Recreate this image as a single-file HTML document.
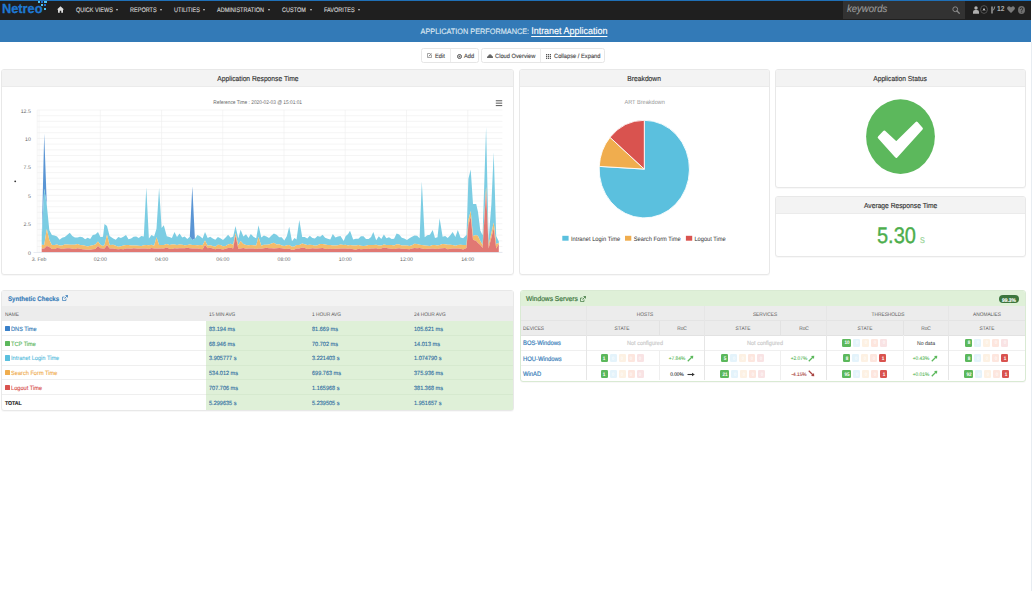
<!DOCTYPE html>
<html><head><meta charset="utf-8">
<style>
*{box-sizing:border-box;margin:0;padding:0}
html,body{width:1033px;height:591px;overflow:hidden;background:#fff;font-family:"Liberation Sans",sans-serif;color:#333;text-rendering:geometricPrecision}
body div{-webkit-text-stroke:.13px currentColor}
.a{position:absolute}
.s{display:inline-block;transform:scaleX(.925);transform-origin:0 50%;white-space:nowrap}
.sc{display:inline-block;transform:scaleX(.925);transform-origin:50% 50%;white-space:nowrap}
#topline{left:0;top:0;width:1031px;height:1px;background:#1f70b8}
#nav{left:0;top:1px;width:1031px;height:19px;background:#1f1f1f}
#band{left:0;top:20px;width:1031px;height:21.5px;background:#337ab7}
#sb{left:1031px;top:42px;width:1.3px;height:549px;background:#e8edf2}
.panel{position:absolute;border:1px solid #e8e8e8;border-radius:3px;background:#fff;box-shadow:0 1px 1px rgba(0,0,0,.03)}
.ph{position:absolute;left:0;top:0;right:0;height:17px;background:#f3f3f3;border-bottom:1px solid #ebebeb;border-radius:2px 2px 0 0;text-align:center}
.navt{top:4.5px;font:6.6px/12px 'Liberation Sans',sans-serif;color:#d5d5d5;transform:scaleX(.84);transform-origin:0 50%;white-space:nowrap}
.caret{top:8.5px;width:0;height:0;border-left:1.8px solid transparent;border-right:1.8px solid transparent;border-top:2px solid #ccc}
.bg{border:1px solid #e6e6e6;border-radius:2.5px;background:#fff}
.bt{top:51.6px;font:6.2px/10px 'Liberation Sans',sans-serif;color:#4a4a4a;transform:scaleX(.925);transform-origin:0 50%;white-space:nowrap}
.pt{display:inline-block;position:relative;top:-2.4px;font:7.25px/17px 'Liberation Sans',sans-serif;color:#333;transform:scaleX(.925);white-space:nowrap;-webkit-text-stroke:.15px #333}
</style></head><body>
<div class="a" id="topline"></div>
<div class="a" id="nav"></div>
<div class="a" id="band"></div>
<div class="a" id="sb"></div>
<div class="a" id="logo" style="left:2px;top:1.5px;font:bold 13.2px/14px 'Liberation Sans',sans-serif;color:#1e78d2;transform:scaleX(.97);transform-origin:0 50%;-webkit-text-stroke:.3px #1e78d2">Netreo</div>
<div class="a" style="left:38px;top:1px;width:2px;height:2px;background:#4fc3f0"></div>
<div class="a" style="left:41px;top:1px;width:2px;height:2px;background:#1f6fd0"></div>
<div class="a" style="left:44px;top:1px;width:3px;height:2px;background:#4fc3f0"></div>
<div class="a" style="left:41px;top:4px;width:2px;height:2px;background:#4fc3f0"></div>
<div class="a" style="left:44px;top:4px;width:2px;height:2px;background:#1f6fd0"></div>
<div class="a" style="left:44px;top:8px;width:2px;height:2px;background:#4fc3f0"></div>
<svg class="a" style="left:57px;top:6px" width="7" height="7" viewBox="0 0 14 13"><path d="M7 0 L14 6.5 L12 6.5 L12 13 L8.5 13 L8.5 9 L5.5 9 L5.5 13 L2 13 L2 6.5 L0 6.5 Z" fill="#ddd"/></svg>
<div class="a navt" style="left:75.5px">QUICK VIEWS</div><div class="a caret" style="left:115.8px"></div>
<div class="a navt" style="left:129.8px">REPORTS</div><div class="a caret" style="left:160.3px"></div>
<div class="a navt" style="left:173.9px">UTILITIES</div><div class="a caret" style="left:202.8px"></div>
<div class="a navt" style="left:217.3px">ADMINISTRATION</div><div class="a caret" style="left:267.8px"></div>
<div class="a navt" style="left:282px">CUSTOM</div><div class="a caret" style="left:309.8px"></div>
<div class="a navt" style="left:323.8px">FAVORITES</div><div class="a caret" style="left:357.8px"></div>
<div class="a" style="left:843px;top:1px;width:122px;height:18px;background:#323232"></div>
<div class="a s" style="left:846.5px;top:3px;font:italic 10.3px/14px 'Liberation Sans',sans-serif;color:#9a9a9a">keywords</div>
<svg class="a" style="left:952px;top:6px" width="8" height="8" viewBox="0 0 16 16"><circle cx="6.5" cy="6.5" r="4.8" fill="none" stroke="#8a8a8a" stroke-width="2"/><path d="M10 10 L14.5 14.5" stroke="#8a8a8a" stroke-width="2.6" stroke-linecap="round"/></svg>
<svg class="a" style="left:973px;top:5.5px" width="6" height="8" viewBox="0 0 12 16"><circle cx="6" cy="4" r="3.4" fill="#b0b0b0"/><path d="M0 15.5 L0 12 Q0 8 4 8 L8 8 Q12 8 12 12 L12 15.5 Z" fill="#b0b0b0"/></svg>
<svg class="a" style="left:980px;top:5px" width="8" height="9" viewBox="0 0 16 18"><ellipse cx="8" cy="9" rx="6.8" ry="7.8" fill="#1a1a1a" stroke="#5a5a5a" stroke-width="1.8"/><path d="M5 12 L8 5.5 L11 12 L8 10 Z" fill="#ddd"/></svg>
<svg class="a" style="left:991px;top:6px" width="5" height="8" viewBox="0 0 10 16"><path d="M2 1 L2 15" stroke="#8a8a8a" stroke-width="3.4"/><path d="M3 9 Q7 7 7.5 1" fill="none" stroke="#8a8a8a" stroke-width="2.4"/></svg>
<div class="a s" style="left:997.3px;top:5.4px;font:bold 7.2px/8px 'Liberation Sans',sans-serif;color:#aaa;-webkit-text-stroke:0">12</div>
<svg class="a" style="left:1007px;top:6px" width="8" height="7" viewBox="0 0 16 14"><path d="M8 14 L1.5 7.5 Q-1 4.5 1.2 1.8 Q4.2 -1 8 3 Q11.8 -1 14.8 1.8 Q17 4.5 14.5 7.5 Z" fill="#7a7a7a"/></svg>
<svg class="a" style="left:1018px;top:5.5px" width="7" height="8" viewBox="0 0 14 16"><ellipse cx="7" cy="8" rx="7" ry="8" fill="#6f6f6f"/><path d="M4.6 6 Q4.6 3.5 7 3.5 Q9.4 3.5 9.4 5.8 Q9.4 7.3 7.6 8.2 L7.3 10" fill="none" stroke="#222" stroke-width="1.6"/><circle cx="7.2" cy="12.2" r="1" fill="#222"/></svg>
<div class="a" id="title" style="left:0;top:20.6px;width:1031px;height:21.5px;text-align:center;font:7.9px/21.5px 'Liberation Sans',sans-serif;color:#dfe9f3"><span class="sc" style="position:relative;left:-1.6px"><span>APPLICATION PERFORMANCE:</span> <span style="color:#fff;font-size:9.7px;text-decoration:underline;text-underline-offset:1.6px;text-decoration-thickness:.7px">Intranet Application</span></span></div>


<div class="a bg" style="left:421px;top:48.4px;width:58px;height:14.4px"></div>
<div class="a" style="left:450px;top:48.9px;width:1px;height:13.2px;background:#ececec"></div>
<div class="a bg" style="left:481px;top:48.4px;width:124.2px;height:14.4px"></div>
<div class="a" style="left:540px;top:48.9px;width:1px;height:13.2px;background:#ececec"></div>
<svg class="a" style="left:427px;top:53.3px" width="5" height="5" viewBox="0 0 10 10"><path d="M7 1 L1 1 L1 9 L9 9 L9 4" fill="none" stroke="#777" stroke-width="1.3"/><path d="M4 6.5 L9.5 1" stroke="#555" stroke-width="1.8"/></svg>
<div class="a bt" style="left:434.8px">Edit</div>
<svg class="a" style="left:456.5px;top:53.6px" width="5" height="5" viewBox="0 0 10 10"><circle cx="5" cy="5" r="4" fill="none" stroke="#555" stroke-width="2"/><path d="M5 3 L5 7 M3 5 L7 5" stroke="#555" stroke-width="1.4"/></svg>
<div class="a bt" style="left:463.9px">Add</div>
<svg class="a" style="left:486.5px;top:53.6px" width="6" height="4.5" viewBox="0 0 12 9"><path d="M2.5 9 Q0 9 0 6.5 Q0 4.3 2.3 4 Q2.8 0.5 6.3 0.5 Q9.2 0.5 9.8 3.5 Q12 3.8 12 6.3 Q12 9 9.5 9 Z" fill="#666"/></svg>
<div class="a bt" style="left:494.9px">Cloud Overview</div>
<svg class="a" style="left:545.8px;top:53.5px" width="5.5" height="5" viewBox="0 0 11 10"><g fill="#555"><rect x="0" y="0" width="2.5" height="2.5"/><rect x="4" y="0" width="2.5" height="2.5"/><rect x="8" y="0" width="2.5" height="2.5"/><rect x="0" y="3.7" width="2.5" height="2.5"/><rect x="4" y="3.7" width="2.5" height="2.5"/><rect x="8" y="3.7" width="2.5" height="2.5"/><rect x="0" y="7.4" width="2.5" height="2.5"/><rect x="4" y="7.4" width="2.5" height="2.5"/><rect x="8" y="7.4" width="2.5" height="2.5"/></g></svg>
<div class="a bt" style="left:554px">Collapse / Expand</div>

<div class="panel" style="left:1px;top:69px;width:513px;height:206.3px"><div class="ph"><span class="pt">Application Response Time</span></div></div>
<div class="panel" style="left:519px;top:69px;width:251px;height:206.3px"><div class="ph"><span class="pt">Breakdown</span></div></div>
<div class="panel" style="left:775px;top:69px;width:251px;height:119px"><div class="ph"><span class="pt">Application Status</span></div></div>
<div class="panel" style="left:775px;top:196px;width:251px;height:61px"><div class="ph"><span class="pt">Average Response Time</span></div></div>
<!--CHART-->
<svg class="a" style="left:0;top:87px" width="514" height="188" viewBox="0 87 514 188">
<g stroke="#efefef" stroke-width="0.6"><line x1="37.2" y1="110.00" x2="502.4" y2="110.00"/><line x1="37.2" y1="115.69" x2="502.4" y2="115.69"/><line x1="37.2" y1="121.38" x2="502.4" y2="121.38"/><line x1="37.2" y1="127.06" x2="502.4" y2="127.06"/><line x1="37.2" y1="132.75" x2="502.4" y2="132.75"/><line x1="37.2" y1="138.44" x2="502.4" y2="138.44"/><line x1="37.2" y1="144.13" x2="502.4" y2="144.13"/><line x1="37.2" y1="149.82" x2="502.4" y2="149.82"/><line x1="37.2" y1="155.50" x2="502.4" y2="155.50"/><line x1="37.2" y1="161.19" x2="502.4" y2="161.19"/><line x1="37.2" y1="166.88" x2="502.4" y2="166.88"/><line x1="37.2" y1="172.57" x2="502.4" y2="172.57"/><line x1="37.2" y1="178.26" x2="502.4" y2="178.26"/><line x1="37.2" y1="183.94" x2="502.4" y2="183.94"/><line x1="37.2" y1="189.63" x2="502.4" y2="189.63"/><line x1="37.2" y1="195.32" x2="502.4" y2="195.32"/><line x1="37.2" y1="201.01" x2="502.4" y2="201.01"/><line x1="37.2" y1="206.70" x2="502.4" y2="206.70"/><line x1="37.2" y1="212.38" x2="502.4" y2="212.38"/><line x1="37.2" y1="218.07" x2="502.4" y2="218.07"/><line x1="37.2" y1="223.76" x2="502.4" y2="223.76"/><line x1="37.2" y1="229.45" x2="502.4" y2="229.45"/><line x1="37.2" y1="235.14" x2="502.4" y2="235.14"/><line x1="37.2" y1="240.82" x2="502.4" y2="240.82"/><line x1="37.2" y1="246.51" x2="502.4" y2="246.51"/><line x1="37.2" y1="252.20" x2="502.4" y2="252.20"/><line x1="39.06" y1="110.0" x2="39.06" y2="252.2"/><line x1="100.30" y1="110.0" x2="100.30" y2="252.2"/><line x1="161.54" y1="110.0" x2="161.54" y2="252.2"/><line x1="222.78" y1="110.0" x2="222.78" y2="252.2"/><line x1="284.02" y1="110.0" x2="284.02" y2="252.2"/><line x1="345.26" y1="110.0" x2="345.26" y2="252.2"/><line x1="406.50" y1="110.0" x2="406.50" y2="252.2"/><line x1="467.74" y1="110.0" x2="467.74" y2="252.2"/><line x1="37.2" y1="110.0" x2="37.2" y2="252.2"/></g>
<polygon points="41.7,239.1 44.2,133.6 46.8,205.0 49.3,230.0 51.9,235.1 54.5,235.5 57.0,236.4 59.6,239.7 62.1,237.8 64.7,237.1 67.2,235.0 69.8,232.7 72.3,236.1 74.9,237.6 77.5,237.6 80.0,236.8 82.6,237.2 85.1,239.2 87.7,237.8 90.2,239.1 92.8,235.1 95.3,234.5 98.0,232.0 100.4,237.1 103.0,236.8 104.5,224.0 107.0,226.0 109.6,236.0 113.2,238.4 115.8,239.7 118.3,237.1 120.9,238.1 123.4,236.8 126.0,235.0 128.5,239.3 131.1,238.5 133.6,236.8 136.2,236.5 138.7,237.9 141.3,235.9 143.8,236.6 146.3,187.2 148.9,238.4 151.5,235.0 154.1,236.5 156.5,228.7 159.1,187.8 161.6,228.0 163.8,225.3 166.8,236.3 169.4,237.0 171.9,238.0 174.5,232.1 177.0,236.9 179.6,233.6 182.2,237.4 184.7,236.6 187.3,239.1 189.8,236.8 192.3,186.3 194.9,238.7 197.5,235.1 200.0,236.2 202.6,238.5 205.0,232.0 207.7,238.1 210.2,236.8 212.8,238.5 215.3,239.7 217.9,236.9 220.4,238.3 223.0,240.0 225.6,237.6 228.1,234.7 230.7,237.8 233.2,236.4 235.5,226.0 238.3,238.4 240.6,229.7 243.4,236.5 246.0,234.2 248.5,238.1 250.8,234.0 253.7,237.1 256.2,238.2 258.5,225.2 261.3,237.5 263.9,235.4 266.4,236.5 269.0,238.0 271.5,235.4 273.9,233.4 276.6,234.7 279.2,237.2 281.7,237.2 284.3,240.5 286.9,235.9 289.2,226.7 292.0,241.3 294.5,238.1 296.5,239.6 299.3,220.1 302.2,236.9 304.7,237.1 307.3,238.4 309.8,235.8 312.4,238.0 314.9,238.4 317.5,235.9 320.1,236.7 322.6,234.8 325.1,237.8 327.7,238.7 330.3,239.4 332.8,234.0 335.4,237.6 337.9,236.5 340.5,236.1 343.7,240.9 345.6,236.2 348.1,234.0 350.0,230.8 353.2,239.5 355.8,238.7 358.4,238.8 360.9,236.2 363.5,236.3 366.0,238.9 368.6,238.9 371.1,237.0 373.3,232.0 376.2,240.3 378.8,236.3 381.3,239.0 383.9,234.6 386.4,238.2 389.0,237.2 391.6,239.1 394.1,238.7 396.6,233.6 399.2,234.6 401.8,237.8 404.3,238.5 406.9,240.1 409.4,238.3 412.0,236.8 414.5,235.4 417.1,235.8 419.6,238.2 421.8,181.6 424.7,237.3 427.3,235.2 429.9,234.7 432.7,230.0 435.0,237.9 437.5,237.3 439.6,218.3 442.6,236.8 445.2,236.0 447.7,238.0 450.3,235.3 452.7,232.0 455.4,236.9 457.8,230.0 460.5,237.5 463.1,238.2 466.5,235.0 468.4,178.8 470.7,169.5 473.0,204.0 476.2,204.0 478.0,212.0 480.3,230.6 482.6,235.2 486.1,126.9 488.6,239.8 491.4,204.0 493.7,152.3 496.2,235.9 498.8,241.5 498.8,241.5 496.2,235.9 493.7,152.3 491.4,204.0 488.6,239.8 486.1,126.9 482.6,235.2 480.3,230.6 478.0,212.0 476.2,204.0 473.0,204.0 470.7,169.5 468.4,178.8 466.5,235.0 463.1,238.2 460.5,237.5 457.8,230.0 455.4,236.9 452.7,232.0 450.3,235.3 447.7,238.0 445.2,236.0 442.6,236.8 439.6,218.3 437.5,237.3 435.0,237.9 432.7,230.0 429.9,234.7 427.3,235.2 424.7,237.3 421.8,181.6 419.6,238.2 417.1,235.8 414.5,235.4 412.0,236.8 409.4,238.3 406.9,240.1 404.3,238.5 401.8,237.8 399.2,234.6 396.6,233.6 394.1,238.7 391.6,239.1 389.0,237.2 386.4,238.2 383.9,234.6 381.3,239.0 378.8,236.3 376.2,240.3 373.3,232.0 371.1,237.0 368.6,238.9 366.0,238.9 363.5,236.3 360.9,236.2 358.4,238.8 355.8,238.7 353.2,239.5 350.0,230.8 348.1,234.0 345.6,236.2 343.7,240.9 340.5,236.1 337.9,236.5 335.4,237.6 332.8,234.0 330.3,239.4 327.7,238.7 325.1,237.8 322.6,234.8 320.1,236.7 317.5,235.9 314.9,238.4 312.4,238.0 309.8,235.8 307.3,238.4 304.7,237.1 302.2,236.9 299.3,220.1 296.5,239.6 294.5,238.1 292.0,241.3 289.2,226.7 286.9,235.9 284.3,240.5 281.7,237.2 279.2,237.2 276.6,234.7 273.9,233.4 271.5,235.4 269.0,238.0 266.4,236.5 263.9,235.4 261.3,237.5 258.5,225.2 256.2,238.2 253.7,237.1 250.8,234.0 248.5,238.1 246.0,234.2 243.4,236.5 240.6,229.7 238.3,238.4 235.5,226.0 233.2,236.4 230.7,237.8 228.1,234.7 225.6,237.6 223.0,240.0 220.4,238.3 217.9,236.9 215.3,239.7 212.8,238.5 210.2,236.8 207.7,238.1 205.0,232.0 202.6,238.5 200.0,236.2 197.5,235.1 194.9,238.7 192.3,240.0 189.8,236.8 187.3,239.1 184.7,236.6 182.2,237.4 179.6,233.6 177.0,236.9 174.5,232.1 171.9,238.0 169.4,237.0 166.8,236.3 163.8,225.3 161.6,228.0 159.1,187.8 156.5,228.7 154.1,236.5 151.5,235.0 148.9,238.4 146.3,187.2 143.8,236.6 141.3,235.9 138.7,237.9 136.2,236.5 133.6,236.8 131.1,238.5 128.5,239.3 126.0,235.0 123.4,236.8 120.9,238.1 118.3,237.1 115.8,239.7 113.2,238.4 109.6,236.0 107.0,226.0 104.5,224.0 103.0,236.8 100.4,237.1 98.0,232.0 95.3,234.5 92.8,235.1 90.2,239.1 87.7,237.8 85.1,239.2 82.6,237.2 80.0,236.8 77.5,237.6 74.9,237.6 72.3,236.1 69.8,232.7 67.2,235.0 64.7,237.1 62.1,237.8 59.6,239.7 57.0,236.4 54.5,235.5 51.9,235.1 49.3,230.0 46.8,205.0 44.2,188.7 41.7,239.1" fill="#5a95d4"/>
<polygon points="41.7,239.1 44.2,188.7 46.8,205.0 49.3,230.0 51.9,235.1 54.5,235.5 57.0,236.4 59.6,239.7 62.1,237.8 64.7,237.1 67.2,235.0 69.8,232.7 72.3,236.1 74.9,237.6 77.5,237.6 80.0,236.8 82.6,237.2 85.1,239.2 87.7,237.8 90.2,239.1 92.8,235.1 95.3,234.5 98.0,232.0 100.4,237.1 103.0,236.8 104.5,224.0 107.0,226.0 109.6,236.0 113.2,238.4 115.8,239.7 118.3,237.1 120.9,238.1 123.4,236.8 126.0,235.0 128.5,239.3 131.1,238.5 133.6,236.8 136.2,236.5 138.7,237.9 141.3,235.9 143.8,236.6 146.3,187.2 148.9,238.4 151.5,235.0 154.1,236.5 156.5,228.7 159.1,187.8 161.6,228.0 163.8,225.3 166.8,236.3 169.4,237.0 171.9,238.0 174.5,232.1 177.0,236.9 179.6,233.6 182.2,237.4 184.7,236.6 187.3,239.1 189.8,236.8 192.3,240.0 194.9,238.7 197.5,235.1 200.0,236.2 202.6,238.5 205.0,232.0 207.7,238.1 210.2,236.8 212.8,238.5 215.3,239.7 217.9,236.9 220.4,238.3 223.0,240.0 225.6,237.6 228.1,234.7 230.7,237.8 233.2,236.4 235.5,226.0 238.3,238.4 240.6,229.7 243.4,236.5 246.0,234.2 248.5,238.1 250.8,234.0 253.7,237.1 256.2,238.2 258.5,225.2 261.3,237.5 263.9,235.4 266.4,236.5 269.0,238.0 271.5,235.4 273.9,233.4 276.6,234.7 279.2,237.2 281.7,237.2 284.3,240.5 286.9,235.9 289.2,226.7 292.0,241.3 294.5,238.1 296.5,239.6 299.3,220.1 302.2,236.9 304.7,237.1 307.3,238.4 309.8,235.8 312.4,238.0 314.9,238.4 317.5,235.9 320.1,236.7 322.6,234.8 325.1,237.8 327.7,238.7 330.3,239.4 332.8,234.0 335.4,237.6 337.9,236.5 340.5,236.1 343.7,240.9 345.6,236.2 348.1,234.0 350.0,230.8 353.2,239.5 355.8,238.7 358.4,238.8 360.9,236.2 363.5,236.3 366.0,238.9 368.6,238.9 371.1,237.0 373.3,232.0 376.2,240.3 378.8,236.3 381.3,239.0 383.9,234.6 386.4,238.2 389.0,237.2 391.6,239.1 394.1,238.7 396.6,233.6 399.2,234.6 401.8,237.8 404.3,238.5 406.9,240.1 409.4,238.3 412.0,236.8 414.5,235.4 417.1,235.8 419.6,238.2 421.8,181.6 424.7,237.3 427.3,235.2 429.9,234.7 432.7,230.0 435.0,237.9 437.5,237.3 439.6,218.3 442.6,236.8 445.2,236.0 447.7,238.0 450.3,235.3 452.7,232.0 455.4,236.9 457.8,230.0 460.5,237.5 463.1,238.2 466.5,235.0 468.4,178.8 470.7,169.5 473.0,204.0 476.2,204.0 478.0,212.0 480.3,230.6 482.6,235.2 486.1,126.9 488.6,239.8 491.4,204.0 493.7,152.3 496.2,235.9 498.8,241.5 498.8,243.0 496.2,244.1 493.7,222.5 491.4,233.0 488.6,244.9 486.1,186.8 482.6,245.0 480.3,241.0 478.0,236.0 476.2,235.0 473.0,236.0 470.7,211.0 468.4,220.0 466.5,245.0 463.1,245.0 460.5,244.8 457.8,245.0 455.4,245.7 452.7,245.0 450.3,244.7 447.7,244.8 445.2,244.3 442.6,244.0 439.6,245.0 437.5,245.6 435.0,245.1 432.7,245.0 429.9,246.0 427.3,245.7 424.7,245.6 421.8,245.0 419.6,244.8 417.1,244.1 414.5,243.7 412.0,245.2 409.4,246.1 406.9,245.5 404.3,245.5 401.8,245.6 399.2,244.4 396.6,244.2 394.1,245.5 391.6,245.1 389.0,245.1 386.4,244.9 383.9,244.6 381.3,245.6 378.8,245.6 376.2,244.8 373.3,245.0 371.1,244.9 368.6,245.1 366.0,245.8 363.5,246.0 360.9,245.8 358.4,245.1 355.8,245.4 353.2,245.5 350.0,245.0 348.1,245.4 345.6,244.7 343.7,245.0 340.5,244.4 337.9,245.3 335.4,245.5 332.8,245.4 330.3,244.9 327.7,245.1 325.1,244.6 322.6,243.9 320.1,243.9 317.5,245.2 314.9,245.7 312.4,245.1 309.8,244.8 307.3,245.0 304.7,244.3 302.2,243.5 299.3,245.0 296.5,245.0 294.5,246.4 292.0,246.8 289.2,245.0 286.9,245.3 284.3,246.1 281.7,245.6 279.2,244.2 276.6,244.6 273.9,242.8 271.5,243.6 269.0,244.6 266.4,244.8 263.9,244.8 261.3,245.7 258.5,237.1 256.2,245.4 253.7,245.2 250.8,245.0 248.5,245.3 246.0,245.0 243.4,244.1 240.6,241.0 238.3,245.2 235.5,233.0 233.2,244.8 230.7,243.8 228.1,244.5 225.6,246.0 223.0,246.3 220.4,245.0 217.9,244.8 215.3,246.8 212.8,246.1 210.2,245.2 207.7,245.7 205.0,240.6 202.6,245.3 200.0,245.1 197.5,245.2 194.9,245.1 192.3,245.0 189.8,244.6 187.3,244.9 184.7,245.3 182.2,244.8 179.6,244.5 177.0,245.0 174.5,244.5 171.9,244.6 169.4,244.9 166.8,244.1 163.8,245.0 161.6,245.0 159.1,245.0 156.5,237.3 154.1,245.7 151.5,244.7 148.9,245.3 146.3,245.0 143.8,245.3 141.3,245.9 138.7,245.7 136.2,245.5 133.6,245.5 131.1,245.6 128.5,245.0 126.0,245.0 123.4,245.6 120.9,246.2 118.3,246.8 115.8,245.8 113.2,244.7 109.6,245.0 107.0,234.7 104.5,245.0 103.0,246.0 100.4,244.7 98.0,241.6 95.3,244.6 92.8,245.3 90.2,245.7 87.7,246.4 85.1,245.8 82.6,245.3 80.0,245.1 77.5,244.1 74.9,244.8 72.3,244.8 69.8,244.7 67.2,244.4 64.7,244.4 62.1,245.6 59.6,245.4 57.0,244.5 54.5,245.0 51.9,244.9 49.3,240.0 46.8,229.0 44.2,245.0 41.7,244.8" fill="#7ccde3"/>
<polygon points="41.7,244.8 44.2,245.0 46.8,229.0 49.3,240.0 51.9,244.9 54.5,245.0 57.0,244.5 59.6,245.4 62.1,245.6 64.7,244.4 67.2,244.4 69.8,244.7 72.3,244.8 74.9,244.8 77.5,244.1 80.0,245.1 82.6,245.3 85.1,245.8 87.7,246.4 90.2,245.7 92.8,245.3 95.3,244.6 98.0,241.6 100.4,244.7 103.0,246.0 104.5,245.0 107.0,234.7 109.6,245.0 113.2,244.7 115.8,245.8 118.3,246.8 120.9,246.2 123.4,245.6 126.0,245.0 128.5,245.0 131.1,245.6 133.6,245.5 136.2,245.5 138.7,245.7 141.3,245.9 143.8,245.3 146.3,245.0 148.9,245.3 151.5,244.7 154.1,245.7 156.5,237.3 159.1,245.0 161.6,245.0 163.8,245.0 166.8,244.1 169.4,244.9 171.9,244.6 174.5,244.5 177.0,245.0 179.6,244.5 182.2,244.8 184.7,245.3 187.3,244.9 189.8,244.6 192.3,245.0 194.9,245.1 197.5,245.2 200.0,245.1 202.6,245.3 205.0,240.6 207.7,245.7 210.2,245.2 212.8,246.1 215.3,246.8 217.9,244.8 220.4,245.0 223.0,246.3 225.6,246.0 228.1,244.5 230.7,243.8 233.2,244.8 235.5,233.0 238.3,245.2 240.6,241.0 243.4,244.1 246.0,245.0 248.5,245.3 250.8,245.0 253.7,245.2 256.2,245.4 258.5,237.1 261.3,245.7 263.9,244.8 266.4,244.8 269.0,244.6 271.5,243.6 273.9,242.8 276.6,244.6 279.2,244.2 281.7,245.6 284.3,246.1 286.9,245.3 289.2,245.0 292.0,246.8 294.5,246.4 296.5,245.0 299.3,245.0 302.2,243.5 304.7,244.3 307.3,245.0 309.8,244.8 312.4,245.1 314.9,245.7 317.5,245.2 320.1,243.9 322.6,243.9 325.1,244.6 327.7,245.1 330.3,244.9 332.8,245.4 335.4,245.5 337.9,245.3 340.5,244.4 343.7,245.0 345.6,244.7 348.1,245.4 350.0,245.0 353.2,245.5 355.8,245.4 358.4,245.1 360.9,245.8 363.5,246.0 366.0,245.8 368.6,245.1 371.1,244.9 373.3,245.0 376.2,244.8 378.8,245.6 381.3,245.6 383.9,244.6 386.4,244.9 389.0,245.1 391.6,245.1 394.1,245.5 396.6,244.2 399.2,244.4 401.8,245.6 404.3,245.5 406.9,245.5 409.4,246.1 412.0,245.2 414.5,243.7 417.1,244.1 419.6,244.8 421.8,245.0 424.7,245.6 427.3,245.7 429.9,246.0 432.7,245.0 435.0,245.1 437.5,245.6 439.6,245.0 442.6,244.0 445.2,244.3 447.7,244.8 450.3,244.7 452.7,245.0 455.4,245.7 457.8,245.0 460.5,244.8 463.1,245.0 466.5,245.0 468.4,220.0 470.7,211.0 473.0,236.0 476.2,235.0 478.0,236.0 480.3,241.0 482.6,245.0 486.1,186.8 488.6,244.9 491.4,233.0 493.7,222.5 496.2,244.1 498.8,243.0 498.8,244.0 496.2,248.4 493.7,228.3 491.4,237.5 488.6,248.5 486.1,191.4 482.6,248.0 480.3,245.0 478.0,243.0 476.2,241.0 473.0,239.8 470.7,216.8 468.4,225.0 466.5,248.0 463.1,249.4 460.5,248.8 457.8,248.5 455.4,248.5 452.7,248.5 450.3,248.8 447.7,249.2 445.2,248.1 442.6,248.2 439.6,248.5 437.5,249.1 435.0,248.8 432.7,248.5 429.9,248.7 427.3,248.8 424.7,248.9 421.8,248.5 419.6,248.1 417.1,248.2 414.5,248.1 412.0,248.5 409.4,249.2 406.9,249.0 404.3,248.8 401.8,248.7 399.2,248.3 396.6,248.5 394.1,248.9 391.6,248.7 389.0,248.6 386.4,248.0 383.9,247.5 381.3,248.6 378.8,249.0 376.2,248.2 373.3,248.5 371.1,248.5 368.6,248.9 366.0,248.8 363.5,249.0 360.9,249.2 358.4,248.8 355.8,249.7 353.2,249.3 350.0,248.5 348.1,248.7 345.6,248.4 343.7,248.5 340.5,248.5 337.9,248.7 335.4,248.8 332.8,248.9 330.3,248.5 327.7,248.9 325.1,248.7 322.6,248.0 320.1,248.3 317.5,248.6 314.9,248.4 312.4,248.2 309.8,248.7 307.3,249.1 304.7,248.0 302.2,247.6 299.3,248.5 296.5,248.5 294.5,249.4 292.0,249.9 289.2,248.5 286.9,248.9 284.3,248.8 281.7,248.3 279.2,248.1 276.6,248.2 273.9,248.5 271.5,248.3 269.0,248.3 266.4,247.8 263.9,248.2 261.3,248.7 258.5,248.5 256.2,249.0 253.7,248.6 250.8,248.5 248.5,248.5 246.0,248.8 243.4,248.1 240.6,248.5 238.3,248.7 235.5,235.5 233.2,248.4 230.7,247.8 228.1,248.1 225.6,248.7 223.0,249.4 220.4,249.0 217.9,248.6 215.3,249.3 212.8,248.6 210.2,247.7 207.7,248.2 205.0,245.0 202.6,249.2 200.0,248.9 197.5,248.6 194.9,248.6 192.3,248.5 189.8,248.2 187.3,247.7 184.7,248.3 182.2,248.3 179.6,248.3 177.0,248.4 174.5,248.3 171.9,248.9 169.4,248.7 166.8,247.4 163.8,248.5 161.6,248.5 159.1,248.5 156.5,248.5 154.1,248.6 151.5,248.0 148.9,248.9 146.3,248.5 143.8,248.4 141.3,248.5 138.7,248.8 136.2,248.4 133.6,248.2 131.1,248.8 128.5,248.4 126.0,248.4 123.4,249.2 120.9,249.1 118.3,249.3 115.8,249.0 113.2,248.5 109.6,248.5 107.0,245.0 104.5,248.5 103.0,248.5 100.4,248.3 98.0,245.9 95.3,249.1 92.8,249.3 90.2,249.7 87.7,249.7 85.1,249.4 82.6,249.2 80.0,248.7 77.5,248.2 74.9,248.9 72.3,248.8 69.8,248.3 67.2,248.2 64.7,248.5 62.1,248.9 59.6,248.2 57.0,248.0 54.5,248.9 51.9,249.1 49.3,247.0 46.8,245.9 44.2,248.5 41.7,248.4" fill="#f2bb6b"/>
<polygon points="41.7,248.4 44.2,248.5 46.8,245.9 49.3,247.0 51.9,249.1 54.5,248.9 57.0,248.0 59.6,248.2 62.1,248.9 64.7,248.5 67.2,248.2 69.8,248.3 72.3,248.8 74.9,248.9 77.5,248.2 80.0,248.7 82.6,249.2 85.1,249.4 87.7,249.7 90.2,249.7 92.8,249.3 95.3,249.1 98.0,245.9 100.4,248.3 103.0,248.5 104.5,248.5 107.0,245.0 109.6,248.5 113.2,248.5 115.8,249.0 118.3,249.3 120.9,249.1 123.4,249.2 126.0,248.4 128.5,248.4 131.1,248.8 133.6,248.2 136.2,248.4 138.7,248.8 141.3,248.5 143.8,248.4 146.3,248.5 148.9,248.9 151.5,248.0 154.1,248.6 156.5,248.5 159.1,248.5 161.6,248.5 163.8,248.5 166.8,247.4 169.4,248.7 171.9,248.9 174.5,248.3 177.0,248.4 179.6,248.3 182.2,248.3 184.7,248.3 187.3,247.7 189.8,248.2 192.3,248.5 194.9,248.6 197.5,248.6 200.0,248.9 202.6,249.2 205.0,245.0 207.7,248.2 210.2,247.7 212.8,248.6 215.3,249.3 217.9,248.6 220.4,249.0 223.0,249.4 225.6,248.7 228.1,248.1 230.7,247.8 233.2,248.4 235.5,235.5 238.3,248.7 240.6,248.5 243.4,248.1 246.0,248.8 248.5,248.5 250.8,248.5 253.7,248.6 256.2,249.0 258.5,248.5 261.3,248.7 263.9,248.2 266.4,247.8 269.0,248.3 271.5,248.3 273.9,248.5 276.6,248.2 279.2,248.1 281.7,248.3 284.3,248.8 286.9,248.9 289.2,248.5 292.0,249.9 294.5,249.4 296.5,248.5 299.3,248.5 302.2,247.6 304.7,248.0 307.3,249.1 309.8,248.7 312.4,248.2 314.9,248.4 317.5,248.6 320.1,248.3 322.6,248.0 325.1,248.7 327.7,248.9 330.3,248.5 332.8,248.9 335.4,248.8 337.9,248.7 340.5,248.5 343.7,248.5 345.6,248.4 348.1,248.7 350.0,248.5 353.2,249.3 355.8,249.7 358.4,248.8 360.9,249.2 363.5,249.0 366.0,248.8 368.6,248.9 371.1,248.5 373.3,248.5 376.2,248.2 378.8,249.0 381.3,248.6 383.9,247.5 386.4,248.0 389.0,248.6 391.6,248.7 394.1,248.9 396.6,248.5 399.2,248.3 401.8,248.7 404.3,248.8 406.9,249.0 409.4,249.2 412.0,248.5 414.5,248.1 417.1,248.2 419.6,248.1 421.8,248.5 424.7,248.9 427.3,248.8 429.9,248.7 432.7,248.5 435.0,248.8 437.5,249.1 439.6,248.5 442.6,248.2 445.2,248.1 447.7,249.2 450.3,248.8 452.7,248.5 455.4,248.5 457.8,248.5 460.5,248.8 463.1,249.4 466.5,248.0 468.4,225.0 470.7,216.8 473.0,239.8 476.2,241.0 478.0,243.0 480.3,245.0 482.6,248.0 486.1,191.4 488.6,248.5 491.4,237.5 493.7,228.3 496.2,248.4 498.8,244.0 498.8,252.2 496.2,252.2 493.7,252.2 491.4,252.2 488.6,252.2 486.1,252.2 482.6,252.2 480.3,252.2 478.0,252.2 476.2,252.2 473.0,252.2 470.7,252.2 468.4,252.2 466.5,252.2 463.1,252.2 460.5,252.2 457.8,252.2 455.4,252.2 452.7,252.2 450.3,252.2 447.7,252.2 445.2,252.2 442.6,252.2 439.6,252.2 437.5,252.2 435.0,252.2 432.7,252.2 429.9,252.2 427.3,252.2 424.7,252.2 421.8,252.2 419.6,252.2 417.1,252.2 414.5,252.2 412.0,252.2 409.4,252.2 406.9,252.2 404.3,252.2 401.8,252.2 399.2,252.2 396.6,252.2 394.1,252.2 391.6,252.2 389.0,252.2 386.4,252.2 383.9,252.2 381.3,252.2 378.8,252.2 376.2,252.2 373.3,252.2 371.1,252.2 368.6,252.2 366.0,252.2 363.5,252.2 360.9,252.2 358.4,252.2 355.8,252.2 353.2,252.2 350.0,252.2 348.1,252.2 345.6,252.2 343.7,252.2 340.5,252.2 337.9,252.2 335.4,252.2 332.8,252.2 330.3,252.2 327.7,252.2 325.1,252.2 322.6,252.2 320.1,252.2 317.5,252.2 314.9,252.2 312.4,252.2 309.8,252.2 307.3,252.2 304.7,252.2 302.2,252.2 299.3,252.2 296.5,252.2 294.5,252.2 292.0,252.2 289.2,252.2 286.9,252.2 284.3,252.2 281.7,252.2 279.2,252.2 276.6,252.2 273.9,252.2 271.5,252.2 269.0,252.2 266.4,252.2 263.9,252.2 261.3,252.2 258.5,252.2 256.2,252.2 253.7,252.2 250.8,252.2 248.5,252.2 246.0,252.2 243.4,252.2 240.6,252.2 238.3,252.2 235.5,252.2 233.2,252.2 230.7,252.2 228.1,252.2 225.6,252.2 223.0,252.2 220.4,252.2 217.9,252.2 215.3,252.2 212.8,252.2 210.2,252.2 207.7,252.2 205.0,252.2 202.6,252.2 200.0,252.2 197.5,252.2 194.9,252.2 192.3,252.2 189.8,252.2 187.3,252.2 184.7,252.2 182.2,252.2 179.6,252.2 177.0,252.2 174.5,252.2 171.9,252.2 169.4,252.2 166.8,252.2 163.8,252.2 161.6,252.2 159.1,252.2 156.5,252.2 154.1,252.2 151.5,252.2 148.9,252.2 146.3,252.2 143.8,252.2 141.3,252.2 138.7,252.2 136.2,252.2 133.6,252.2 131.1,252.2 128.5,252.2 126.0,252.2 123.4,252.2 120.9,252.2 118.3,252.2 115.8,252.2 113.2,252.2 109.6,252.2 107.0,252.2 104.5,252.2 103.0,252.2 100.4,252.2 98.0,252.2 95.3,252.2 92.8,252.2 90.2,252.2 87.7,252.2 85.1,252.2 82.6,252.2 80.0,252.2 77.5,252.2 74.9,252.2 72.3,252.2 69.8,252.2 67.2,252.2 64.7,252.2 62.1,252.2 59.6,252.2 57.0,252.2 54.5,252.2 51.9,252.2 49.3,252.2 46.8,252.2 44.2,252.2 41.7,252.2" fill="#e17873"/>
<line x1="33.5" y1="252.5" x2="502.4" y2="252.5" stroke="#dde3ec" stroke-width="0.7"/>
<g font-family="Liberation Sans" font-size="5.2" fill="#666" transform="translate(0,0)"><text x="30.8" y="254.80" text-anchor="end">0</text><text x="30.8" y="226.36" text-anchor="end">2.5</text><text x="30.8" y="197.92" text-anchor="end">5</text><text x="30.8" y="169.48" text-anchor="end">7.5</text><text x="30.8" y="141.04" text-anchor="end">10</text><text x="30.8" y="112.60" text-anchor="end">12.5</text><text x="39.06" y="260.6" text-anchor="middle">3. Feb</text><text x="100.30" y="260.6" text-anchor="middle">02:00</text><text x="161.54" y="260.6" text-anchor="middle">04:00</text><text x="222.78" y="260.6" text-anchor="middle">06:00</text><text x="284.02" y="260.6" text-anchor="middle">08:00</text><text x="345.26" y="260.6" text-anchor="middle">10:00</text><text x="406.50" y="260.6" text-anchor="middle">12:00</text><text x="467.74" y="260.6" text-anchor="middle">14:00</text></g>
<text x="257.7" y="104.0" text-anchor="middle" font-family="Liberation Sans" font-size="5.4" fill="#666" textLength="88.7" lengthAdjust="spacingAndGlyphs">Reference Time : 2020-02-03 @ 15:01:01</text>
<g fill="#666"><rect x="495.8" y="100.2" width="6.4" height="1.1"/><rect x="495.8" y="102.6" width="6.4" height="1.1"/><rect x="495.8" y="105" width="6.4" height="1.1"/></g>
<circle cx="15.2" cy="181.3" r="0.9" fill="#333"/>
</svg>
<!--/CHART-->
<!--PIE-->
<svg class="a" style="left:519px;top:87px" width="251" height="188" viewBox="519 87 251 188">
<text x="644.7" y="104.4" text-anchor="middle" font-family="Liberation Sans" font-size="6" fill="#999" textLength="40.6" lengthAdjust="spacingAndGlyphs">ART Breakdown</text>
<g transform="translate(644.3 169.1) scale(.925 1)"><path d="M0 0 L0.00 -48.80 A48.8 48.8 0 1 1 -48.72 -2.72 Z" fill="#5bc0de" stroke="#fff" stroke-width="0.9" stroke-linejoin="round"/><path d="M0 0 L-48.72 -2.72 A48.8 48.8 0 0 1 -37.05 -31.76 Z" fill="#f0ad4e" stroke="#fff" stroke-width="0.9" stroke-linejoin="round"/><path d="M0 0 L-37.05 -31.76 A48.8 48.8 0 0 1 -0.00 -48.80 Z" fill="#d9534f" stroke="#fff" stroke-width="0.9" stroke-linejoin="round"/></g>
<rect x="562.3" y="235.8" width="6.3" height="4.9" fill="#5bc0de"/>
<rect x="625" y="235.8" width="6.3" height="4.9" fill="#f0ad4e"/>
<rect x="685.9" y="235.8" width="6.3" height="4.9" fill="#d9534f"/>
<g font-family="Liberation Sans" font-size="6.3" fill="#333" lengthAdjust="spacingAndGlyphs">
<text x="571" y="240.9" textLength="49.3" lengthAdjust="spacingAndGlyphs">Intranet Login Time</text>
<text x="633.8" y="240.9" textLength="47" lengthAdjust="spacingAndGlyphs">Search Form Time</text>
<text x="694.4" y="240.9" textLength="31.4" lengthAdjust="spacingAndGlyphs">Logout Time</text>
</g>
</svg>
<!--/PIE-->
<svg class="a" style="left:775px;top:69px" width="251" height="119" viewBox="775 69 251 119">
<ellipse cx="900.5" cy="136.6" rx="34.4" ry="37.3" fill="#5cb85c"/>
<path d="M884.2 131.8 L896.3 142.9 L916.6 122.9 L921.6 128.6 L896.3 156.6 L879 137.4 Z" fill="#fff" stroke="#fff" stroke-width="2.6" stroke-linejoin="round"/>
</svg>
<div class="a" style="left:775px;top:224px;width:251px;text-align:center;color:#4cae4c;white-space:nowrap"><span class="sc" style="position:relative;left:0;transform:scaleX(.89)"><span style="font-size:22.5px;line-height:24px;-webkit-text-stroke:.35px #4cae4c">5.30</span> <span style="font-size:11px;color:#9cd69c">s</span></span></div>
<!--TABLES-->
<div class="panel" style="left:1px;top:290px;width:513px;height:121.0px;overflow:hidden">
</div>
<div class="a" style="left:2.00px;top:291.00px;width:511.00px;height:15.30px;background:#f3f3f3;"></div>
<div class="a" style="left:2.00px;top:306.30px;width:511.00px;height:14.50px;background:#ececec;"></div>
<div class="a" style="left:206.00px;top:320.80px;width:307.00px;height:89.20px;background:#dff0d8;"></div>
<div class="a" style="left:2.00px;top:335.05px;width:204.00px;height:1.00px;background:#efefef;"></div>
<div class="a" style="left:206.00px;top:335.05px;width:307.00px;height:1.00px;background:#d6e9cf;"></div>
<div class="a" style="left:2.00px;top:349.80px;width:204.00px;height:1.00px;background:#efefef;"></div>
<div class="a" style="left:206.00px;top:349.80px;width:307.00px;height:1.00px;background:#d6e9cf;"></div>
<div class="a" style="left:2.00px;top:364.55px;width:204.00px;height:1.00px;background:#efefef;"></div>
<div class="a" style="left:206.00px;top:364.55px;width:307.00px;height:1.00px;background:#d6e9cf;"></div>
<div class="a" style="left:2.00px;top:379.30px;width:204.00px;height:1.00px;background:#efefef;"></div>
<div class="a" style="left:206.00px;top:379.30px;width:307.00px;height:1.00px;background:#d6e9cf;"></div>
<div class="a" style="left:2.00px;top:394.05px;width:204.00px;height:1.00px;background:#efefef;"></div>
<div class="a" style="left:206.00px;top:394.05px;width:307.00px;height:1.00px;background:#d6e9cf;"></div>
<div class="a" style="left:7.7px;top:290.30px;line-height:20px;font-size:6.65px;color:#337ab7;font-weight:bold;white-space:nowrap;transform:scaleX(0.925);transform-origin:0 50%;">Synthetic Checks</div>
<svg class="a" style="left:62px;top:295px" width="6" height="6" viewBox="0 0 12 12"><path d="M8 7 L8 11 L1 11 L1 4 L5 4" fill="none" stroke="#337ab7" stroke-width="1.4"/><path d="M5 7 L11 1 M7 1 L11 1 L11 5" fill="none" stroke="#337ab7" stroke-width="1.6"/></svg>
<div class="a" style="left:4.9px;top:304.90px;line-height:20px;font-size:5.2px;color:#5a5a5a;font-weight:normal;white-space:nowrap;transform:scaleX(0.925);transform-origin:0 50%;-webkit-text-stroke:0">NAME</div>
<div class="a" style="left:209.4px;top:304.90px;line-height:20px;font-size:5.2px;color:#5a5a5a;font-weight:normal;white-space:nowrap;transform:scaleX(0.925);transform-origin:0 50%;-webkit-text-stroke:0">15 MIN AVG</div>
<div class="a" style="left:311.6px;top:304.90px;line-height:20px;font-size:5.2px;color:#5a5a5a;font-weight:normal;white-space:nowrap;transform:scaleX(0.925);transform-origin:0 50%;-webkit-text-stroke:0">1 HOUR AVG</div>
<div class="a" style="left:413.8px;top:304.90px;line-height:20px;font-size:5.2px;color:#5a5a5a;font-weight:normal;white-space:nowrap;transform:scaleX(0.925);transform-origin:0 50%;-webkit-text-stroke:0">24 HOUR AVG</div>
<div class="a" style="left:4.90px;top:325.78px;width:4.80px;height:5.30px;background:#3a80c9;border-radius:.6px"></div>
<div class="a" style="left:11.2px;top:319.88px;line-height:20px;font-size:6.1px;color:#337ab7;font-weight:normal;white-space:nowrap;transform:scaleX(0.925);transform-origin:0 50%;">DNS Time</div>
<div class="a" style="left:209.4px;top:319.88px;line-height:20px;font-size:6.0px;color:#2f6ea2;font-weight:normal;white-space:nowrap;transform:scaleX(0.925);transform-origin:0 50%;">83.194 ms</div>
<div class="a" style="left:311.6px;top:319.88px;line-height:20px;font-size:6.0px;color:#2f6ea2;font-weight:normal;white-space:nowrap;transform:scaleX(0.925);transform-origin:0 50%;">81.669 ms</div>
<div class="a" style="left:413.8px;top:319.88px;line-height:20px;font-size:6.0px;color:#2f6ea2;font-weight:normal;white-space:nowrap;transform:scaleX(0.925);transform-origin:0 50%;">105.621 ms</div>
<div class="a" style="left:4.90px;top:340.53px;width:4.80px;height:5.30px;background:#5cb85c;border-radius:.6px"></div>
<div class="a" style="left:11.2px;top:334.62px;line-height:20px;font-size:6.1px;color:#5cb85c;font-weight:normal;white-space:nowrap;transform:scaleX(0.925);transform-origin:0 50%;">TCP Time</div>
<div class="a" style="left:209.4px;top:334.62px;line-height:20px;font-size:6.0px;color:#2f6ea2;font-weight:normal;white-space:nowrap;transform:scaleX(0.925);transform-origin:0 50%;">68.946 ms</div>
<div class="a" style="left:311.6px;top:334.62px;line-height:20px;font-size:6.0px;color:#2f6ea2;font-weight:normal;white-space:nowrap;transform:scaleX(0.925);transform-origin:0 50%;">70.702 ms</div>
<div class="a" style="left:413.8px;top:334.62px;line-height:20px;font-size:6.0px;color:#2f6ea2;font-weight:normal;white-space:nowrap;transform:scaleX(0.925);transform-origin:0 50%;">14.013 ms</div>
<div class="a" style="left:4.90px;top:355.28px;width:4.80px;height:5.30px;background:#5bc0de;border-radius:.6px"></div>
<div class="a" style="left:11.2px;top:349.38px;line-height:20px;font-size:6.1px;color:#5bc0de;font-weight:normal;white-space:nowrap;transform:scaleX(0.925);transform-origin:0 50%;">Intranet Login Time</div>
<div class="a" style="left:209.4px;top:349.38px;line-height:20px;font-size:6.0px;color:#2f6ea2;font-weight:normal;white-space:nowrap;transform:scaleX(0.925);transform-origin:0 50%;">3.905777 s</div>
<div class="a" style="left:311.6px;top:349.38px;line-height:20px;font-size:6.0px;color:#2f6ea2;font-weight:normal;white-space:nowrap;transform:scaleX(0.925);transform-origin:0 50%;">3.221403 s</div>
<div class="a" style="left:413.8px;top:349.38px;line-height:20px;font-size:6.0px;color:#2f6ea2;font-weight:normal;white-space:nowrap;transform:scaleX(0.925);transform-origin:0 50%;">1.074790 s</div>
<div class="a" style="left:4.90px;top:370.03px;width:4.80px;height:5.30px;background:#f0ad4e;border-radius:.6px"></div>
<div class="a" style="left:11.2px;top:364.12px;line-height:20px;font-size:6.1px;color:#f0ad4e;font-weight:normal;white-space:nowrap;transform:scaleX(0.925);transform-origin:0 50%;">Search Form Time</div>
<div class="a" style="left:209.4px;top:364.12px;line-height:20px;font-size:6.0px;color:#2f6ea2;font-weight:normal;white-space:nowrap;transform:scaleX(0.925);transform-origin:0 50%;">534.012 ms</div>
<div class="a" style="left:311.6px;top:364.12px;line-height:20px;font-size:6.0px;color:#2f6ea2;font-weight:normal;white-space:nowrap;transform:scaleX(0.925);transform-origin:0 50%;">699.763 ms</div>
<div class="a" style="left:413.8px;top:364.12px;line-height:20px;font-size:6.0px;color:#2f6ea2;font-weight:normal;white-space:nowrap;transform:scaleX(0.925);transform-origin:0 50%;">375.936 ms</div>
<div class="a" style="left:4.90px;top:384.78px;width:4.80px;height:5.30px;background:#d9534f;border-radius:.6px"></div>
<div class="a" style="left:11.2px;top:378.88px;line-height:20px;font-size:6.1px;color:#d9534f;font-weight:normal;white-space:nowrap;transform:scaleX(0.925);transform-origin:0 50%;">Logout Time</div>
<div class="a" style="left:209.4px;top:378.88px;line-height:20px;font-size:6.0px;color:#2f6ea2;font-weight:normal;white-space:nowrap;transform:scaleX(0.925);transform-origin:0 50%;">707.706 ms</div>
<div class="a" style="left:311.6px;top:378.88px;line-height:20px;font-size:6.0px;color:#2f6ea2;font-weight:normal;white-space:nowrap;transform:scaleX(0.925);transform-origin:0 50%;">1.165968 s</div>
<div class="a" style="left:413.8px;top:378.88px;line-height:20px;font-size:6.0px;color:#2f6ea2;font-weight:normal;white-space:nowrap;transform:scaleX(0.925);transform-origin:0 50%;">381.368 ms</div>
<div class="a" style="left:5.3px;top:393.62px;line-height:20px;font-size:5.6px;color:#222;font-weight:bold;white-space:nowrap;transform:scaleX(0.925);transform-origin:0 50%;">TOTAL</div>
<div class="a" style="left:209.4px;top:393.62px;line-height:20px;font-size:6.0px;color:#2f6ea2;font-weight:normal;white-space:nowrap;transform:scaleX(0.925);transform-origin:0 50%;">5.299635 s</div>
<div class="a" style="left:311.6px;top:393.62px;line-height:20px;font-size:6.0px;color:#2f6ea2;font-weight:normal;white-space:nowrap;transform:scaleX(0.925);transform-origin:0 50%;">5.239505 s</div>
<div class="a" style="left:413.8px;top:393.62px;line-height:20px;font-size:6.0px;color:#2f6ea2;font-weight:normal;white-space:nowrap;transform:scaleX(0.925);transform-origin:0 50%;">1.951657 s</div>
<div class="panel" style="left:519.5px;top:289.6px;width:506.0px;height:92.2px;border-color:#d9ead3"></div>
<div class="a" style="left:520.50px;top:290.60px;width:504.00px;height:15.80px;background:#dff0d8;border-radius:2px 2px 0 0"></div>
<div class="a" style="left:520.50px;top:306.40px;width:504.00px;height:28.40px;background:#ececec;"></div>
<div class="a" style="left:520.50px;top:320.30px;width:504.00px;height:0.50px;background:#e4e4e4;"></div>
<div class="a" style="left:520.50px;top:334.80px;width:504.00px;height:0.60px;background:#e2e2e2;"></div>
<div class="a" style="left:520.50px;top:349.70px;width:504.00px;height:0.70px;background:#efefef;"></div>
<div class="a" style="left:520.50px;top:364.90px;width:504.00px;height:0.70px;background:#efefef;"></div>
<div class="a" style="left:585.60px;top:306.40px;width:0.70px;height:73.80px;background:#e6e6e6;"></div>
<div class="a" style="left:704.10px;top:306.40px;width:0.70px;height:73.80px;background:#e6e6e6;"></div>
<div class="a" style="left:826.30px;top:306.40px;width:0.70px;height:73.80px;background:#e6e6e6;"></div>
<div class="a" style="left:948.20px;top:306.40px;width:0.70px;height:73.80px;background:#e6e6e6;"></div>
<div class="a" style="left:658.80px;top:320.50px;width:0.70px;height:14.30px;background:#e2e2e2;"></div>
<div class="a" style="left:658.80px;top:350.00px;width:0.70px;height:30.20px;background:#efefef;"></div>
<div class="a" style="left:780.20px;top:320.50px;width:0.70px;height:14.30px;background:#e2e2e2;"></div>
<div class="a" style="left:780.20px;top:350.00px;width:0.70px;height:30.20px;background:#efefef;"></div>
<div class="a" style="left:903.10px;top:320.50px;width:0.70px;height:14.30px;background:#e2e2e2;"></div>
<div class="a" style="left:903.10px;top:334.80px;width:0.70px;height:45.40px;background:#efefef;"></div>
<div class="a" style="left:525.7px;top:290.40px;line-height:20px;font-size:7.0px;color:#3c763d;font-weight:normal;white-space:nowrap;transform:scaleX(0.95);transform-origin:0 50%;-webkit-text-stroke:.2px currentColor">Windows Servers</div>
<svg class="a" style="left:580px;top:295.5px" width="6" height="6" viewBox="0 0 12 12"><path d="M8 7 L8 11 L1 11 L1 4 L5 4" fill="none" stroke="#3c763d" stroke-width="1.4"/><path d="M5 7 L11 1 M7 1 L11 1 L11 5" fill="none" stroke="#3c763d" stroke-width="1.6"/></svg>
<div class="a" style="left:999.00px;top:295.40px;width:20.00px;height:7.40px;background:#3c763d;border-radius:4px"></div>
<div class="a" style="left:859.00px;width:300px;text-align:center;top:290.80px;line-height:20px;font-size:5.4px;color:#fff;font-weight:bold;white-space:nowrap;transform:scaleX(0.925);transform-origin:50% 50%;">99.3%</div>
<div class="a" style="left:495.10px;width:300px;text-align:center;top:305.30px;line-height:20px;font-size:5.2px;color:#5a5a5a;font-weight:normal;white-space:nowrap;transform:scaleX(0.925);transform-origin:50% 50%;-webkit-text-stroke:0">HOSTS</div>
<div class="a" style="left:615.40px;width:300px;text-align:center;top:305.30px;line-height:20px;font-size:5.2px;color:#5a5a5a;font-weight:normal;white-space:nowrap;transform:scaleX(0.925);transform-origin:50% 50%;-webkit-text-stroke:0">SERVICES</div>
<div class="a" style="left:737.60px;width:300px;text-align:center;top:305.30px;line-height:20px;font-size:5.2px;color:#5a5a5a;font-weight:normal;white-space:nowrap;transform:scaleX(0.925);transform-origin:50% 50%;-webkit-text-stroke:0">THRESHOLDS</div>
<div class="a" style="left:836.70px;width:300px;text-align:center;top:305.30px;line-height:20px;font-size:5.2px;color:#5a5a5a;font-weight:normal;white-space:nowrap;transform:scaleX(0.925);transform-origin:50% 50%;-webkit-text-stroke:0">ANOMALIES</div>
<div class="a" style="left:523.2px;top:319.40px;line-height:20px;font-size:5.2px;color:#5a5a5a;font-weight:normal;white-space:nowrap;transform:scaleX(0.925);transform-origin:0 50%;-webkit-text-stroke:0">DEVICES</div>
<div class="a" style="left:472.40px;width:300px;text-align:center;top:319.30px;line-height:20px;font-size:5.2px;color:#5a5a5a;font-weight:normal;white-space:nowrap;transform:scaleX(0.925);transform-origin:50% 50%;-webkit-text-stroke:0">STATE</div>
<div class="a" style="left:531.70px;width:300px;text-align:center;top:319.30px;line-height:20px;font-size:5.2px;color:#5a5a5a;font-weight:normal;white-space:nowrap;transform:scaleX(0.925);transform-origin:50% 50%;-webkit-text-stroke:0">RoC</div>
<div class="a" style="left:592.70px;width:300px;text-align:center;top:319.30px;line-height:20px;font-size:5.2px;color:#5a5a5a;font-weight:normal;white-space:nowrap;transform:scaleX(0.925);transform-origin:50% 50%;-webkit-text-stroke:0">STATE</div>
<div class="a" style="left:653.50px;width:300px;text-align:center;top:319.30px;line-height:20px;font-size:5.2px;color:#5a5a5a;font-weight:normal;white-space:nowrap;transform:scaleX(0.925);transform-origin:50% 50%;-webkit-text-stroke:0">RoC</div>
<div class="a" style="left:714.60px;width:300px;text-align:center;top:319.30px;line-height:20px;font-size:5.2px;color:#5a5a5a;font-weight:normal;white-space:nowrap;transform:scaleX(0.925);transform-origin:50% 50%;-webkit-text-stroke:0">STATE</div>
<div class="a" style="left:775.70px;width:300px;text-align:center;top:319.30px;line-height:20px;font-size:5.2px;color:#5a5a5a;font-weight:normal;white-space:nowrap;transform:scaleX(0.925);transform-origin:50% 50%;-webkit-text-stroke:0">RoC</div>
<div class="a" style="left:836.70px;width:300px;text-align:center;top:319.30px;line-height:20px;font-size:5.2px;color:#5a5a5a;font-weight:normal;white-space:nowrap;transform:scaleX(0.925);transform-origin:50% 50%;-webkit-text-stroke:0">STATE</div>
<div class="a" style="left:523.2px;top:334.20px;line-height:20px;font-size:6.4px;color:#337ab7;font-weight:normal;white-space:nowrap;transform:scaleX(0.915);transform-origin:0 50%;-webkit-text-stroke:.15px currentColor">BOS-Windows</div>
<div class="a" style="left:523.2px;top:349.50px;line-height:20px;font-size:6.4px;color:#337ab7;font-weight:normal;white-space:nowrap;transform:scaleX(0.915);transform-origin:0 50%;-webkit-text-stroke:.15px currentColor">HOU-Windows</div>
<div class="a" style="left:523.2px;top:364.90px;line-height:20px;font-size:6.4px;color:#337ab7;font-weight:normal;white-space:nowrap;transform:scaleX(0.915);transform-origin:0 50%;-webkit-text-stroke:.15px currentColor">WinAD</div>
<div class="a" style="left:495.10px;width:300px;text-align:center;top:334.10px;line-height:20px;font-size:6.0px;color:#c8c8c8;font-weight:normal;white-space:nowrap;transform:scaleX(0.925);transform-origin:50% 50%;">Not configured</div>
<div class="a" style="left:615.40px;width:300px;text-align:center;top:334.10px;line-height:20px;font-size:6.0px;color:#c8c8c8;font-weight:normal;white-space:nowrap;transform:scaleX(0.925);transform-origin:50% 50%;">Not configured</div>
<div class="a" style="left:775.70px;width:300px;text-align:center;top:334.10px;line-height:20px;font-size:5.6px;color:#333;font-weight:normal;white-space:nowrap;transform:scaleX(0.925);transform-origin:50% 50%;-webkit-text-stroke:0">No data</div>
<div class="a" style="left:841.85px;top:338.80px;width:9.50px;height:7.80px;background:#5cb85c;border-radius:1.3px"></div>
<div class="a" style="left:696.60px;width:300px;text-align:center;top:333.30px;line-height:20px;font-size:5.0px;color:#fff;font-weight:bold;white-space:nowrap;transform:scaleX(0.925);transform-origin:50% 50%;-webkit-text-stroke:0">10</div>
<div class="a" style="left:853.35px;top:338.80px;width:7.00px;height:7.80px;background:#e4f3fb;border-radius:1.3px"></div>
<div class="a" style="left:706.85px;width:300px;text-align:center;top:333.30px;line-height:20px;font-size:5.0px;color:rgba(255,255,255,.7);font-weight:bold;white-space:nowrap;transform:scaleX(0.925);transform-origin:50% 50%;-webkit-text-stroke:0">0</div>
<div class="a" style="left:862.35px;top:338.80px;width:7.00px;height:7.80px;background:#fdf1e3;border-radius:1.3px"></div>
<div class="a" style="left:715.85px;width:300px;text-align:center;top:333.30px;line-height:20px;font-size:5.0px;color:rgba(255,255,255,.7);font-weight:bold;white-space:nowrap;transform:scaleX(0.925);transform-origin:50% 50%;-webkit-text-stroke:0">0</div>
<div class="a" style="left:871.35px;top:338.80px;width:7.00px;height:7.80px;background:#fde6de;border-radius:1.3px"></div>
<div class="a" style="left:724.85px;width:300px;text-align:center;top:333.30px;line-height:20px;font-size:5.0px;color:rgba(255,255,255,.7);font-weight:bold;white-space:nowrap;transform:scaleX(0.925);transform-origin:50% 50%;-webkit-text-stroke:0">0</div>
<div class="a" style="left:880.35px;top:338.80px;width:7.00px;height:7.80px;background:#f9e3e4;border-radius:1.3px"></div>
<div class="a" style="left:733.85px;width:300px;text-align:center;top:333.30px;line-height:20px;font-size:5.0px;color:rgba(255,255,255,.7);font-weight:bold;white-space:nowrap;transform:scaleX(0.925);transform-origin:50% 50%;-webkit-text-stroke:0">0</div>
<div class="a" style="left:965.20px;top:338.80px;width:7.00px;height:7.80px;background:#5cb85c;border-radius:1.3px"></div>
<div class="a" style="left:818.70px;width:300px;text-align:center;top:333.30px;line-height:20px;font-size:5.0px;color:#fff;font-weight:bold;white-space:nowrap;transform:scaleX(0.925);transform-origin:50% 50%;-webkit-text-stroke:0">8</div>
<div class="a" style="left:974.20px;top:338.80px;width:7.00px;height:7.80px;background:#e4f3fb;border-radius:1.3px"></div>
<div class="a" style="left:827.70px;width:300px;text-align:center;top:333.30px;line-height:20px;font-size:5.0px;color:rgba(255,255,255,.7);font-weight:bold;white-space:nowrap;transform:scaleX(0.925);transform-origin:50% 50%;-webkit-text-stroke:0">0</div>
<div class="a" style="left:983.20px;top:338.80px;width:7.00px;height:7.80px;background:#fdf1e3;border-radius:1.3px"></div>
<div class="a" style="left:836.70px;width:300px;text-align:center;top:333.30px;line-height:20px;font-size:5.0px;color:rgba(255,255,255,.7);font-weight:bold;white-space:nowrap;transform:scaleX(0.925);transform-origin:50% 50%;-webkit-text-stroke:0">0</div>
<div class="a" style="left:992.20px;top:338.80px;width:7.00px;height:7.80px;background:#fde6de;border-radius:1.3px"></div>
<div class="a" style="left:845.70px;width:300px;text-align:center;top:333.30px;line-height:20px;font-size:5.0px;color:rgba(255,255,255,.7);font-weight:bold;white-space:nowrap;transform:scaleX(0.925);transform-origin:50% 50%;-webkit-text-stroke:0">0</div>
<div class="a" style="left:1001.20px;top:338.80px;width:7.00px;height:7.80px;background:#f9e3e4;border-radius:1.3px"></div>
<div class="a" style="left:854.70px;width:300px;text-align:center;top:333.30px;line-height:20px;font-size:5.0px;color:rgba(255,255,255,.7);font-weight:bold;white-space:nowrap;transform:scaleX(0.925);transform-origin:50% 50%;-webkit-text-stroke:0">0</div>
<div class="a" style="left:600.90px;top:354.45px;width:7.00px;height:7.80px;background:#5cb85c;border-radius:1.3px"></div>
<div class="a" style="left:454.40px;width:300px;text-align:center;top:348.95px;line-height:20px;font-size:5.0px;color:#fff;font-weight:bold;white-space:nowrap;transform:scaleX(0.925);transform-origin:50% 50%;-webkit-text-stroke:0">1</div>
<div class="a" style="left:609.90px;top:354.45px;width:7.00px;height:7.80px;background:#e4f3fb;border-radius:1.3px"></div>
<div class="a" style="left:463.40px;width:300px;text-align:center;top:348.95px;line-height:20px;font-size:5.0px;color:rgba(255,255,255,.7);font-weight:bold;white-space:nowrap;transform:scaleX(0.925);transform-origin:50% 50%;-webkit-text-stroke:0">0</div>
<div class="a" style="left:618.90px;top:354.45px;width:7.00px;height:7.80px;background:#fdf1e3;border-radius:1.3px"></div>
<div class="a" style="left:472.40px;width:300px;text-align:center;top:348.95px;line-height:20px;font-size:5.0px;color:rgba(255,255,255,.7);font-weight:bold;white-space:nowrap;transform:scaleX(0.925);transform-origin:50% 50%;-webkit-text-stroke:0">0</div>
<div class="a" style="left:627.90px;top:354.45px;width:7.00px;height:7.80px;background:#fde6de;border-radius:1.3px"></div>
<div class="a" style="left:481.40px;width:300px;text-align:center;top:348.95px;line-height:20px;font-size:5.0px;color:rgba(255,255,255,.7);font-weight:bold;white-space:nowrap;transform:scaleX(0.925);transform-origin:50% 50%;-webkit-text-stroke:0">0</div>
<div class="a" style="left:636.90px;top:354.45px;width:7.00px;height:7.80px;background:#f9e3e4;border-radius:1.3px"></div>
<div class="a" style="left:490.40px;width:300px;text-align:center;top:348.95px;line-height:20px;font-size:5.0px;color:rgba(255,255,255,.7);font-weight:bold;white-space:nowrap;transform:scaleX(0.925);transform-origin:50% 50%;-webkit-text-stroke:0">0</div>
<div class="a" style="left:721.20px;top:354.45px;width:7.00px;height:7.80px;background:#5cb85c;border-radius:1.3px"></div>
<div class="a" style="left:574.70px;width:300px;text-align:center;top:348.95px;line-height:20px;font-size:5.0px;color:#fff;font-weight:bold;white-space:nowrap;transform:scaleX(0.925);transform-origin:50% 50%;-webkit-text-stroke:0">5</div>
<div class="a" style="left:730.20px;top:354.45px;width:7.00px;height:7.80px;background:#e4f3fb;border-radius:1.3px"></div>
<div class="a" style="left:583.70px;width:300px;text-align:center;top:348.95px;line-height:20px;font-size:5.0px;color:rgba(255,255,255,.7);font-weight:bold;white-space:nowrap;transform:scaleX(0.925);transform-origin:50% 50%;-webkit-text-stroke:0">0</div>
<div class="a" style="left:739.20px;top:354.45px;width:7.00px;height:7.80px;background:#fdf1e3;border-radius:1.3px"></div>
<div class="a" style="left:592.70px;width:300px;text-align:center;top:348.95px;line-height:20px;font-size:5.0px;color:rgba(255,255,255,.7);font-weight:bold;white-space:nowrap;transform:scaleX(0.925);transform-origin:50% 50%;-webkit-text-stroke:0">0</div>
<div class="a" style="left:748.20px;top:354.45px;width:7.00px;height:7.80px;background:#fde6de;border-radius:1.3px"></div>
<div class="a" style="left:601.70px;width:300px;text-align:center;top:348.95px;line-height:20px;font-size:5.0px;color:rgba(255,255,255,.7);font-weight:bold;white-space:nowrap;transform:scaleX(0.925);transform-origin:50% 50%;-webkit-text-stroke:0">0</div>
<div class="a" style="left:757.20px;top:354.45px;width:7.00px;height:7.80px;background:#f9e3e4;border-radius:1.3px"></div>
<div class="a" style="left:610.70px;width:300px;text-align:center;top:348.95px;line-height:20px;font-size:5.0px;color:rgba(255,255,255,.7);font-weight:bold;white-space:nowrap;transform:scaleX(0.925);transform-origin:50% 50%;-webkit-text-stroke:0">0</div>
<div class="a" style="left:843.10px;top:354.45px;width:7.00px;height:7.80px;background:#5cb85c;border-radius:1.3px"></div>
<div class="a" style="left:696.60px;width:300px;text-align:center;top:348.95px;line-height:20px;font-size:5.0px;color:#fff;font-weight:bold;white-space:nowrap;transform:scaleX(0.925);transform-origin:50% 50%;-webkit-text-stroke:0">8</div>
<div class="a" style="left:852.10px;top:354.45px;width:7.00px;height:7.80px;background:#e4f3fb;border-radius:1.3px"></div>
<div class="a" style="left:705.60px;width:300px;text-align:center;top:348.95px;line-height:20px;font-size:5.0px;color:rgba(255,255,255,.7);font-weight:bold;white-space:nowrap;transform:scaleX(0.925);transform-origin:50% 50%;-webkit-text-stroke:0">0</div>
<div class="a" style="left:861.10px;top:354.45px;width:7.00px;height:7.80px;background:#fdf1e3;border-radius:1.3px"></div>
<div class="a" style="left:714.60px;width:300px;text-align:center;top:348.95px;line-height:20px;font-size:5.0px;color:rgba(255,255,255,.7);font-weight:bold;white-space:nowrap;transform:scaleX(0.925);transform-origin:50% 50%;-webkit-text-stroke:0">0</div>
<div class="a" style="left:870.10px;top:354.45px;width:7.00px;height:7.80px;background:#fde6de;border-radius:1.3px"></div>
<div class="a" style="left:723.60px;width:300px;text-align:center;top:348.95px;line-height:20px;font-size:5.0px;color:rgba(255,255,255,.7);font-weight:bold;white-space:nowrap;transform:scaleX(0.925);transform-origin:50% 50%;-webkit-text-stroke:0">0</div>
<div class="a" style="left:879.10px;top:354.45px;width:7.00px;height:7.80px;background:#d9534f;border-radius:1.3px"></div>
<div class="a" style="left:732.60px;width:300px;text-align:center;top:348.95px;line-height:20px;font-size:5.0px;color:#fff;font-weight:bold;white-space:nowrap;transform:scaleX(0.925);transform-origin:50% 50%;-webkit-text-stroke:0">1</div>
<div class="a" style="left:965.20px;top:354.45px;width:7.00px;height:7.80px;background:#5cb85c;border-radius:1.3px"></div>
<div class="a" style="left:818.70px;width:300px;text-align:center;top:348.95px;line-height:20px;font-size:5.0px;color:#fff;font-weight:bold;white-space:nowrap;transform:scaleX(0.925);transform-origin:50% 50%;-webkit-text-stroke:0">8</div>
<div class="a" style="left:974.20px;top:354.45px;width:7.00px;height:7.80px;background:#e4f3fb;border-radius:1.3px"></div>
<div class="a" style="left:827.70px;width:300px;text-align:center;top:348.95px;line-height:20px;font-size:5.0px;color:rgba(255,255,255,.7);font-weight:bold;white-space:nowrap;transform:scaleX(0.925);transform-origin:50% 50%;-webkit-text-stroke:0">0</div>
<div class="a" style="left:983.20px;top:354.45px;width:7.00px;height:7.80px;background:#fdf1e3;border-radius:1.3px"></div>
<div class="a" style="left:836.70px;width:300px;text-align:center;top:348.95px;line-height:20px;font-size:5.0px;color:rgba(255,255,255,.7);font-weight:bold;white-space:nowrap;transform:scaleX(0.925);transform-origin:50% 50%;-webkit-text-stroke:0">0</div>
<div class="a" style="left:992.20px;top:354.45px;width:7.00px;height:7.80px;background:#fde6de;border-radius:1.3px"></div>
<div class="a" style="left:845.70px;width:300px;text-align:center;top:348.95px;line-height:20px;font-size:5.0px;color:rgba(255,255,255,.7);font-weight:bold;white-space:nowrap;transform:scaleX(0.925);transform-origin:50% 50%;-webkit-text-stroke:0">0</div>
<div class="a" style="left:1001.20px;top:354.45px;width:7.00px;height:7.80px;background:#d9534f;border-radius:1.3px"></div>
<div class="a" style="left:854.70px;width:300px;text-align:center;top:348.95px;line-height:20px;font-size:5.0px;color:#fff;font-weight:bold;white-space:nowrap;transform:scaleX(0.925);transform-origin:50% 50%;-webkit-text-stroke:0">1</div>
<div class="a" style="left:600.90px;top:370.00px;width:7.00px;height:7.80px;background:#5cb85c;border-radius:1.3px"></div>
<div class="a" style="left:454.40px;width:300px;text-align:center;top:364.50px;line-height:20px;font-size:5.0px;color:#fff;font-weight:bold;white-space:nowrap;transform:scaleX(0.925);transform-origin:50% 50%;-webkit-text-stroke:0">1</div>
<div class="a" style="left:609.90px;top:370.00px;width:7.00px;height:7.80px;background:#e4f3fb;border-radius:1.3px"></div>
<div class="a" style="left:463.40px;width:300px;text-align:center;top:364.50px;line-height:20px;font-size:5.0px;color:rgba(255,255,255,.7);font-weight:bold;white-space:nowrap;transform:scaleX(0.925);transform-origin:50% 50%;-webkit-text-stroke:0">0</div>
<div class="a" style="left:618.90px;top:370.00px;width:7.00px;height:7.80px;background:#fdf1e3;border-radius:1.3px"></div>
<div class="a" style="left:472.40px;width:300px;text-align:center;top:364.50px;line-height:20px;font-size:5.0px;color:rgba(255,255,255,.7);font-weight:bold;white-space:nowrap;transform:scaleX(0.925);transform-origin:50% 50%;-webkit-text-stroke:0">0</div>
<div class="a" style="left:627.90px;top:370.00px;width:7.00px;height:7.80px;background:#fde6de;border-radius:1.3px"></div>
<div class="a" style="left:481.40px;width:300px;text-align:center;top:364.50px;line-height:20px;font-size:5.0px;color:rgba(255,255,255,.7);font-weight:bold;white-space:nowrap;transform:scaleX(0.925);transform-origin:50% 50%;-webkit-text-stroke:0">0</div>
<div class="a" style="left:636.90px;top:370.00px;width:7.00px;height:7.80px;background:#f9e3e4;border-radius:1.3px"></div>
<div class="a" style="left:490.40px;width:300px;text-align:center;top:364.50px;line-height:20px;font-size:5.0px;color:rgba(255,255,255,.7);font-weight:bold;white-space:nowrap;transform:scaleX(0.925);transform-origin:50% 50%;-webkit-text-stroke:0">0</div>
<div class="a" style="left:719.95px;top:370.00px;width:9.50px;height:7.80px;background:#5cb85c;border-radius:1.3px"></div>
<div class="a" style="left:574.70px;width:300px;text-align:center;top:364.50px;line-height:20px;font-size:5.0px;color:#fff;font-weight:bold;white-space:nowrap;transform:scaleX(0.925);transform-origin:50% 50%;-webkit-text-stroke:0">21</div>
<div class="a" style="left:731.45px;top:370.00px;width:7.00px;height:7.80px;background:#e4f3fb;border-radius:1.3px"></div>
<div class="a" style="left:584.95px;width:300px;text-align:center;top:364.50px;line-height:20px;font-size:5.0px;color:rgba(255,255,255,.7);font-weight:bold;white-space:nowrap;transform:scaleX(0.925);transform-origin:50% 50%;-webkit-text-stroke:0">0</div>
<div class="a" style="left:740.45px;top:370.00px;width:7.00px;height:7.80px;background:#fdf1e3;border-radius:1.3px"></div>
<div class="a" style="left:593.95px;width:300px;text-align:center;top:364.50px;line-height:20px;font-size:5.0px;color:rgba(255,255,255,.7);font-weight:bold;white-space:nowrap;transform:scaleX(0.925);transform-origin:50% 50%;-webkit-text-stroke:0">0</div>
<div class="a" style="left:749.45px;top:370.00px;width:7.00px;height:7.80px;background:#fde6de;border-radius:1.3px"></div>
<div class="a" style="left:602.95px;width:300px;text-align:center;top:364.50px;line-height:20px;font-size:5.0px;color:rgba(255,255,255,.7);font-weight:bold;white-space:nowrap;transform:scaleX(0.925);transform-origin:50% 50%;-webkit-text-stroke:0">0</div>
<div class="a" style="left:758.45px;top:370.00px;width:7.00px;height:7.80px;background:#f9e3e4;border-radius:1.3px"></div>
<div class="a" style="left:611.95px;width:300px;text-align:center;top:364.50px;line-height:20px;font-size:5.0px;color:rgba(255,255,255,.7);font-weight:bold;white-space:nowrap;transform:scaleX(0.925);transform-origin:50% 50%;-webkit-text-stroke:0">0</div>
<div class="a" style="left:841.85px;top:370.00px;width:9.50px;height:7.80px;background:#5cb85c;border-radius:1.3px"></div>
<div class="a" style="left:696.60px;width:300px;text-align:center;top:364.50px;line-height:20px;font-size:5.0px;color:#fff;font-weight:bold;white-space:nowrap;transform:scaleX(0.925);transform-origin:50% 50%;-webkit-text-stroke:0">95</div>
<div class="a" style="left:853.35px;top:370.00px;width:7.00px;height:7.80px;background:#e4f3fb;border-radius:1.3px"></div>
<div class="a" style="left:706.85px;width:300px;text-align:center;top:364.50px;line-height:20px;font-size:5.0px;color:rgba(255,255,255,.7);font-weight:bold;white-space:nowrap;transform:scaleX(0.925);transform-origin:50% 50%;-webkit-text-stroke:0">0</div>
<div class="a" style="left:862.35px;top:370.00px;width:7.00px;height:7.80px;background:#fdf1e3;border-radius:1.3px"></div>
<div class="a" style="left:715.85px;width:300px;text-align:center;top:364.50px;line-height:20px;font-size:5.0px;color:rgba(255,255,255,.7);font-weight:bold;white-space:nowrap;transform:scaleX(0.925);transform-origin:50% 50%;-webkit-text-stroke:0">0</div>
<div class="a" style="left:871.35px;top:370.00px;width:7.00px;height:7.80px;background:#fde6de;border-radius:1.3px"></div>
<div class="a" style="left:724.85px;width:300px;text-align:center;top:364.50px;line-height:20px;font-size:5.0px;color:rgba(255,255,255,.7);font-weight:bold;white-space:nowrap;transform:scaleX(0.925);transform-origin:50% 50%;-webkit-text-stroke:0">0</div>
<div class="a" style="left:880.35px;top:370.00px;width:7.00px;height:7.80px;background:#d9534f;border-radius:1.3px"></div>
<div class="a" style="left:733.85px;width:300px;text-align:center;top:364.50px;line-height:20px;font-size:5.0px;color:#fff;font-weight:bold;white-space:nowrap;transform:scaleX(0.925);transform-origin:50% 50%;-webkit-text-stroke:0">1</div>
<div class="a" style="left:963.95px;top:370.00px;width:9.50px;height:7.80px;background:#5cb85c;border-radius:1.3px"></div>
<div class="a" style="left:818.70px;width:300px;text-align:center;top:364.50px;line-height:20px;font-size:5.0px;color:#fff;font-weight:bold;white-space:nowrap;transform:scaleX(0.925);transform-origin:50% 50%;-webkit-text-stroke:0">92</div>
<div class="a" style="left:975.45px;top:370.00px;width:7.00px;height:7.80px;background:#e4f3fb;border-radius:1.3px"></div>
<div class="a" style="left:828.95px;width:300px;text-align:center;top:364.50px;line-height:20px;font-size:5.0px;color:rgba(255,255,255,.7);font-weight:bold;white-space:nowrap;transform:scaleX(0.925);transform-origin:50% 50%;-webkit-text-stroke:0">0</div>
<div class="a" style="left:984.45px;top:370.00px;width:7.00px;height:7.80px;background:#fdf1e3;border-radius:1.3px"></div>
<div class="a" style="left:837.95px;width:300px;text-align:center;top:364.50px;line-height:20px;font-size:5.0px;color:rgba(255,255,255,.7);font-weight:bold;white-space:nowrap;transform:scaleX(0.925);transform-origin:50% 50%;-webkit-text-stroke:0">0</div>
<div class="a" style="left:993.45px;top:370.00px;width:7.00px;height:7.80px;background:#fde6de;border-radius:1.3px"></div>
<div class="a" style="left:846.95px;width:300px;text-align:center;top:364.50px;line-height:20px;font-size:5.0px;color:rgba(255,255,255,.7);font-weight:bold;white-space:nowrap;transform:scaleX(0.925);transform-origin:50% 50%;-webkit-text-stroke:0">0</div>
<div class="a" style="left:1002.45px;top:370.00px;width:7.00px;height:7.80px;background:#d9534f;border-radius:1.3px"></div>
<div class="a" style="left:855.95px;width:300px;text-align:center;top:364.50px;line-height:20px;font-size:5.0px;color:#fff;font-weight:bold;white-space:nowrap;transform:scaleX(0.925);transform-origin:50% 50%;-webkit-text-stroke:0">1</div>
<div class="a" style="left:527.40px;width:300px;text-align:center;top:349.45px;line-height:20px;font-size:5.2px;color:#5cb85c;font-weight:normal;white-space:nowrap;transform:scaleX(0.925);transform-origin:50% 50%;-webkit-text-stroke:.1px currentColor">+7.84%</div>
<svg class="a" style="left:686.5px;top:354.9px" width="7" height="7" viewBox="0 0 14 14"><path d="M1.5 12.5 L11 3" stroke="#5cb85c" stroke-width="2.4"/><path d="M6 2 L12.5 1.5 L12 8 Z" fill="#5cb85c"/></svg>
<div class="a" style="left:527.40px;width:300px;text-align:center;top:365.00px;line-height:20px;font-size:5.2px;color:#333;font-weight:normal;white-space:nowrap;transform:scaleX(0.925);transform-origin:50% 50%;-webkit-text-stroke:.1px currentColor">0.00%</div>
<svg class="a" style="left:686.5px;top:370.9px" width="8" height="7" viewBox="0 0 16 14"><path d="M1 7 L11 7" stroke="#333" stroke-width="2.2"/><path d="M10 3.5 L15.5 7 L10 10.5 Z" fill="#333"/></svg>
<div class="a" style="left:649.20px;width:300px;text-align:center;top:349.45px;line-height:20px;font-size:5.2px;color:#5cb85c;font-weight:normal;white-space:nowrap;transform:scaleX(0.925);transform-origin:50% 50%;-webkit-text-stroke:.1px currentColor">+2.07%</div>
<svg class="a" style="left:808.3px;top:354.9px" width="7" height="7" viewBox="0 0 14 14"><path d="M1.5 12.5 L11 3" stroke="#5cb85c" stroke-width="2.4"/><path d="M6 2 L12.5 1.5 L12 8 Z" fill="#5cb85c"/></svg>
<div class="a" style="left:649.20px;width:300px;text-align:center;top:365.00px;line-height:20px;font-size:5.2px;color:#a94442;font-weight:normal;white-space:nowrap;transform:scaleX(0.925);transform-origin:50% 50%;-webkit-text-stroke:.1px currentColor">-4.15%</div>
<svg class="a" style="left:808.3px;top:370.4px" width="7" height="7" viewBox="0 0 14 14"><path d="M1.5 1.5 L11 11" stroke="#a94442" stroke-width="2.4"/><path d="M6 12 L12.5 12.5 L12 6 Z" fill="#a94442"/></svg>
<div class="a" style="left:771.40px;width:300px;text-align:center;top:349.45px;line-height:20px;font-size:5.2px;color:#5cb85c;font-weight:normal;white-space:nowrap;transform:scaleX(0.925);transform-origin:50% 50%;-webkit-text-stroke:.1px currentColor">+0.43%</div>
<svg class="a" style="left:930.5px;top:354.9px" width="7" height="7" viewBox="0 0 14 14"><path d="M1.5 12.5 L11 3" stroke="#5cb85c" stroke-width="2.4"/><path d="M6 2 L12.5 1.5 L12 8 Z" fill="#5cb85c"/></svg>
<div class="a" style="left:771.40px;width:300px;text-align:center;top:365.00px;line-height:20px;font-size:5.2px;color:#5cb85c;font-weight:normal;white-space:nowrap;transform:scaleX(0.925);transform-origin:50% 50%;-webkit-text-stroke:.1px currentColor">+0.01%</div>
<svg class="a" style="left:930.5px;top:370.4px" width="7" height="7" viewBox="0 0 14 14"><path d="M1.5 12.5 L11 3" stroke="#5cb85c" stroke-width="2.4"/><path d="M6 2 L12.5 1.5 L12 8 Z" fill="#5cb85c"/></svg>
<!--/TABLES-->
</body></html>
